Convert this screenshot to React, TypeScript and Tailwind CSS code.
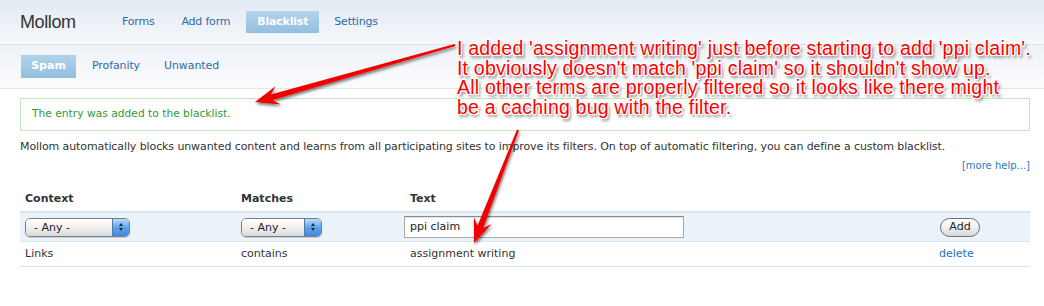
import React from "react";

type Pt = [number, number];

// builds a tapered arrow polygon from start to tip
function arrowPoints(
  start: Pt,
  tip: Pt,
  w1: number,
  w2: number,
  headLen: number,
  headW: number
): string {
  const dx = tip[0] - start[0];
  const dy = tip[1] - start[1];
  const len = Math.hypot(dx, dy);
  const ux = dx / len;
  const uy = dy / len;
  const nx = -uy;
  const ny = ux;
  const neck: Pt = [tip[0] - ux * headLen * 0.72, tip[1] - uy * headLen * 0.72];
  const barb: Pt = [tip[0] - ux * headLen, tip[1] - uy * headLen];
  const pts: Pt[] = [
    [start[0] + (nx * w1) / 2, start[1] + (ny * w1) / 2],
    [neck[0] + (nx * w2) / 2, neck[1] + (ny * w2) / 2],
    [barb[0] + (nx * headW) / 2, barb[1] + (ny * headW) / 2],
    tip,
    [barb[0] - (nx * headW) / 2, barb[1] - (ny * headW) / 2],
    [neck[0] - (nx * w2) / 2, neck[1] - (ny * w2) / 2],
    [start[0] - (nx * w1) / 2, start[1] - (ny * w1) / 2],
  ];
  return pts.map((p) => `${p[0].toFixed(1)},${p[1].toFixed(1)}`).join(" ");
}

function Arrows() {
  return (
    <svg
      className="pointer-events-none absolute left-0 top-0"
      width={1044}
      height={306}
      viewBox="0 0 1044 306"
    >
      <defs>
        <filter id="shadow" x="-20%" y="-20%" width="140%" height="140%">
          <feDropShadow dx="1" dy="2" stdDeviation="1.5" floodColor="#000" floodOpacity="0.55" />
        </filter>
      </defs>
      <g filter="url(#shadow)" fill="#f20000">
        <polygon points={arrowPoints([455, 45], [255, 102], 2, 6, 24, 19)} />
        <polygon points={arrowPoints([518, 130], [474, 243], 2, 6, 24, 19)} />
      </g>
    </svg>
  );
}

function Stepper() {
  return (
    <div className="flex w-[17px] flex-col items-center justify-center gap-[2px] border-l border-[#4f79a8] bg-linear-to-b from-[#b9dcfb] via-[#5ea4ec] to-[#3f8ae0]">
      <div className="h-0 w-0 border-x-[2.5px] border-b-[3px] border-x-transparent border-b-[#1b2a3a]" />
      <div className="h-0 w-0 border-x-[2.5px] border-t-[3px] border-x-transparent border-t-[#1b2a3a]" />
    </div>
  );
}

function Select({ width }: { width: string }) {
  return (
    <div
      className={`flex h-[19px] ${width} overflow-hidden rounded-[5px] border border-[#7d7d7d] shadow-[0_1px_1px_rgba(0,0,0,0.15)]`}
    >
      <div className="flex-1 bg-linear-to-b from-white via-[#f1f1f1] to-[#d9d9d9] pl-[8px] text-[11px] leading-[17px] text-[#222]">
        - Any -
      </div>
      <Stepper />
    </div>
  );
}

export default function App() {
  const tabLink = "text-[11px] tracking-[-0.2px] text-[#2a6aad]";
  return (
    <div className="relative h-[306px] w-[1044px] overflow-hidden bg-white font-['DejaVu_Sans',sans-serif] text-[#333]">
      {/* top bar */}
      <div className="flex h-[45px] items-center border-b border-[#dfe5ec] bg-linear-to-b from-[#e3eaf3] to-[#f6f8fb] pl-[20px]">
        <span className="w-[102px] font-['Liberation_Sans',sans-serif] text-[18px] tracking-[-0.4px] text-[#333]">
          Mollom
        </span>
        <a className={tabLink}>Forms</a>
        <a className={`ml-[27px] ${tabLink}`}>Add form</a>
        <span className="ml-[16px] flex h-[22px] w-[73px] items-center justify-center rounded-[1px] bg-linear-to-b from-[#b4d3eb] to-[#93bfe0] text-[11px] font-bold tracking-[-0.2px] text-white">
          Blacklist
        </span>
        <a className={`ml-[15px] ${tabLink}`}>Settings</a>
      </div>

      {/* secondary tabs */}
      <div className="flex h-[44px] items-center border-b border-[#e3e8ee] bg-linear-to-b from-[#eef2f7] to-[#fbfcfd] pl-[21px]">
        <span className="mr-[4px] flex h-[23px] w-[55px] items-center justify-center bg-linear-to-b from-[#b2d2ea] to-[#92bedf] text-[11px] font-bold text-white">
          Spam
        </span>
        <a className="px-[12px] text-[11px] tracking-[-0.1px] text-[#2a6aad]">Profanity</a>
        <a className="px-[12px] text-[11px] tracking-[-0.1px] text-[#2a6aad]">Unwanted</a>
      </div>

      <div className="pl-[20px] pr-[14px]">
        <div className="mt-[9px] flex h-[33px] items-center border border-[#bfe8bf] pl-[11px] text-[10.7px] text-[#2f9a2f]">
          The entry was added to the blacklist.
        </div>

        <p className="mt-[8px] text-[11px] leading-[16px] tracking-[-0.1px]">
          Mollom automatically blocks unwanted content and learns from all participating sites to improve its filters. On top of automatic filtering, you can define a custom blacklist.
        </p>
        <div className="mt-[3px] text-right text-[10px] leading-[16px] text-[#2f78c0]">[more help...]</div>

        {/* blacklist table */}
        <div className="mt-[14px] text-[11px]">
          <div className="grid h-[23px] grid-cols-[216px_164px_530px_1fr] items-center font-bold text-[#333]">
            <div className="pl-[5px]">Context</div>
            <div className="pl-[5px]">Matches</div>
            <div className="pl-[10px]">Text</div>
            <div />
          </div>
          <div className="grid h-[31px] grid-cols-[216px_164px_530px_1fr] items-center border-t-2 border-b border-t-[#d5e5f4] border-b-[#d5e5f4] bg-[#ebf3fa]">
            <div className="pl-[5px]">
              <Select width="w-[105px]" />
            </div>
            <div className="pl-[5px]">
              <Select width="w-[81px]" />
            </div>
            <div className="pl-[4px]">
              <div className="flex h-[22px] w-[280px] items-center border border-[#a9a9a9] border-t-[#8a8a8a] bg-white pl-[5px] text-[11px] text-[#222] shadow-[inset_0_1px_1px_rgba(0,0,0,0.12)]">
                ppi claim
              </div>
            </div>
            <div className="pl-[10px]">
              <button className="flex h-[19px] w-[40px] items-center justify-center rounded-full border border-[#6e6e6e] bg-linear-to-b from-white via-[#f0f0f0] to-[#d8d8d8] text-[11px] text-[#222]">
                Add
              </button>
            </div>
          </div>
          <div className="grid h-[25px] grid-cols-[216px_164px_530px_1fr] items-center border-b border-[#d5e5f4]">
            <div className="pl-[5px]">Links</div>
            <div className="pl-[5px]">contains</div>
            <div className="pl-[10px]">assignment writing</div>
            <div className="pl-[9px] text-[#1f6fc4]">delete</div>
          </div>
        </div>
      </div>

      {/* annotation */}
      <div className="absolute left-[457px] top-[39px] font-['Liberation_Sans',sans-serif] text-[19.5px] leading-[19.5px] tracking-[0.2px] text-[#ff0000] [text-shadow:1px_0_0_#fff,-1px_0_0_#fff,0_1px_0_#fff,0_-1px_0_#fff,1px_1px_0_#fff,-1px_-1px_0_#fff,1px_-1px_0_#fff,-1px_1px_0_#fff,2px_3px_3px_rgba(0,0,0,0.55)]">
        <div>I added 'assignment writing' just before starting to add 'ppi claim'.</div>
        <div>It obviously doesn't match 'ppi claim' so it shouldn't show up.</div>
        <div>All other terms are properly filtered so it looks like there might</div>
        <div>be a caching bug with the filter.</div>
      </div>

      <Arrows />
    </div>
  );
}
